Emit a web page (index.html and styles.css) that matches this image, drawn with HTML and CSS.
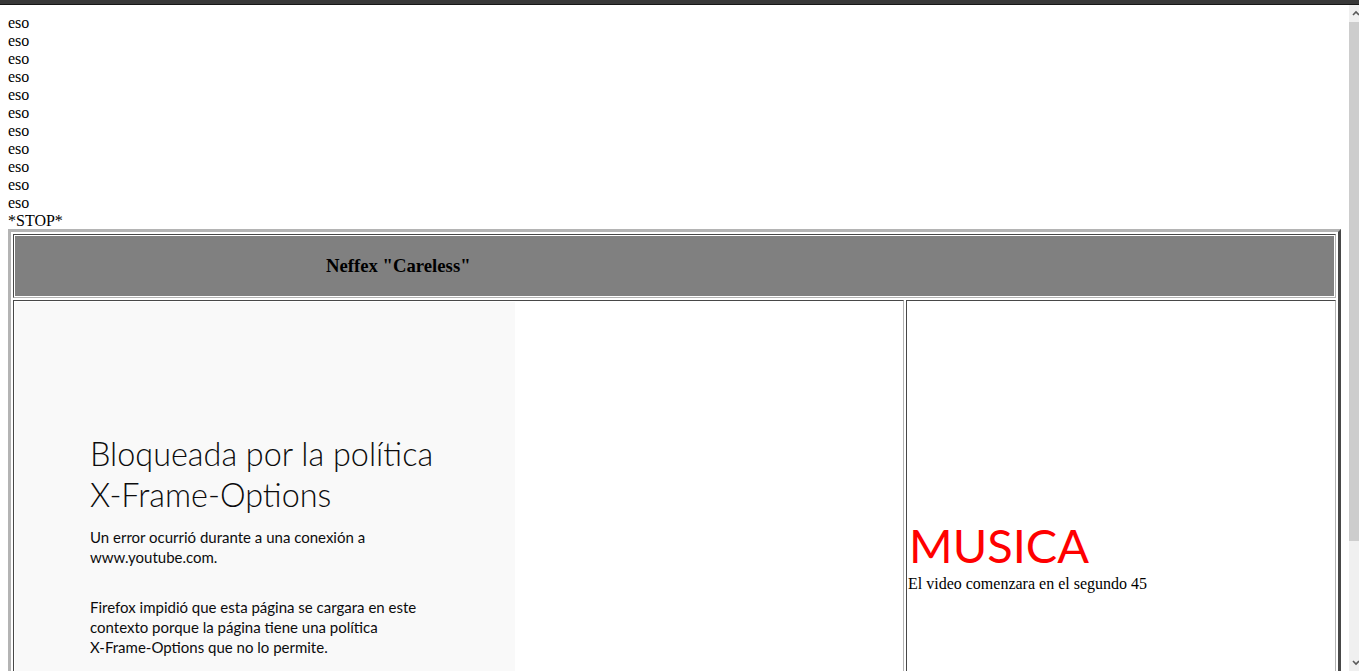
FILE: index.html
```html
<!DOCTYPE html>
<html lang="es">
<head>
<meta charset="utf-8">
<title>Neffex Careless</title>
<link rel="stylesheet" href="styles.css">
</head>
<body>
<div class="topbar"></div>
<div class="viewport">
  <div class="page">
    <div class="lines">
      <div>eso</div><div>eso</div><div>eso</div><div>eso</div><div>eso</div><div>eso</div>
      <div>eso</div><div>eso</div><div>eso</div><div>eso</div><div>eso</div>
      <div class="stop">*STOP*</div>
    </div>
    <table class="main">
      <tr>
        <th class="head" colspan="2"><div class="head-fill"><h3 class="title">Neffex "Careless"</h3></div></th>
      </tr>
      <tr>
        <td class="cell-video">
          <div class="frame">
            <h1 class="err-title">Bloqueada por la política<br>X-Frame-Options</h1>
            <p class="err-short">Un error ocurrió durante a una conexión a<br>www.youtube.com.</p>
            <p class="err-long">Firefox impidió que esta página se cargara en este<br>contexto porque la página tiene una política<br>X-Frame-Options que no lo permite.</p>
          </div>
        </td>
        <td class="cell-info">
          <div class="musica">MUSICA</div>
          <div class="note">El video comenzara en el segundo 45</div>
        </td>
      </tr>
    </table>
  </div>
  <div class="scrollbar">
    <div class="sb-btn">
      <svg width="8" height="6" viewBox="0 0 8 6"><path d="M1 5 L4 2 L7 5" fill="none" stroke="#5a5a5a" stroke-width="1.6"/></svg>
    </div>
    <div class="sb-track">
      <div class="sb-thumb"></div>
    </div>
    <div class="sb-btn">
      <svg width="8" height="6" viewBox="0 0 8 6"><path d="M1 1 L4 4 L7 1" fill="none" stroke="#5a5a5a" stroke-width="1.6"/></svg>
    </div>
  </div>
</div>
</body>
</html>
```

FILE: styles.css
```css
html, body {
  margin: 0;
  padding: 0;
  height: 100%;
  overflow: hidden;
  background: #fff;
}
body {
  display: flex;
  flex-direction: column;
  font-family: "Liberation Serif", "Times New Roman", serif;
  font-size: 16px;
  color: #000;
}
.topbar {
  flex: 0 0 4px;
  background: #383838;
  border-bottom: 1px solid #161616;
}
.viewport {
  flex: 1 1 auto;
  display: flex;
  min-height: 0;
}
.page {
  flex: 1 1 auto;
  min-width: 0;
  overflow: hidden;
  padding: 9px 8px 8px 8px;
}
.scrollbar {
  flex: 0 0 10px;
  display: flex;
  flex-direction: column;
  background: #f0f0f0;
}
.sb-btn {
  flex: 0 0 16px;
  display: flex;
  align-items: center;
  justify-content: flex-end;
  overflow: hidden;
}
.sb-btn svg {
  display: block;
  margin-right: -1px;
}
.sb-track {
  flex: 1 1 auto;
  padding-top: 1px;
}
.sb-thumb {
  height: 519px;
  background: #cdcdcd;
}
.lines {
  line-height: 18px;
}
.stop {
  line-height: 17px;
}
.main {
  width: 100%;
  border-collapse: separate;
  border-spacing: 2px;
  border-style: solid;
  border-width: 3px;
  border-color: #b4b4b4 #484848 #484848 #b4b4b4;
}
.main th, .main td {
  border-style: solid;
  border-width: 1px;
  border-color: #484848 #b4b4b4 #b4b4b4 #484848;
  padding: 1px;
}
.head {
  background: #fff;
  text-align: left;
}
.head-fill {
  background: #808080;
  padding: 19px 0 19px 311px;
}
.title {
  margin: 0;
  font-size: 18.72px;
  font-weight: bold;
  line-height: 22px;
}
.cell-video {
  width: 887px;
  vertical-align: middle;
}
.frame {
  width: 500px;
  height: 500px;
  margin-bottom: 4px;
  background: #f9f9f9;
  box-sizing: border-box;
  padding: 131px 0 0 75px;
  font-family: Lato, "Open Sans", sans-serif;
  color: #0c0c0d;
  overflow: hidden;
}
.err-title {
  margin: 0;
  font-size: 32.4px;
  font-weight: 300;
  line-height: 41px;
}
.err-short {
  margin: 12px 0 0;
  font-size: 15px;
  line-height: 20px;
}
.err-long {
  margin: 30px 0 0;
  font-size: 15px;
  line-height: 20px;
}
.cell-info {
  vertical-align: middle;
  text-align: left;
}
.musica {
  font-family: Lato, "Open Sans", sans-serif;
  font-size: 47px;
  line-height: 58px;
  color: #ff0000;
  padding-left: 1px;
}
.note {
  line-height: 18px;
  padding-top: 1px;
}
```
